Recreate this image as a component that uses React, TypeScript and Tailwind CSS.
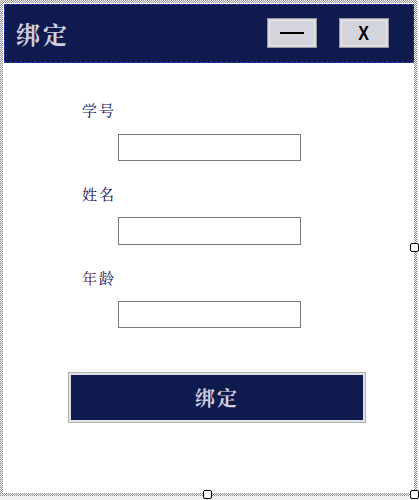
import React from "react";

const cjk = { fontFamily: '"Noto Serif CJK SC", "Noto Sans CJK SC", serif' };

function Handle({ className }: { className: string }) {
  return (
    <div
      className={`absolute w-[9px] h-[9px] bg-white border border-black rounded-[2px] ${className}`}
    />
  );
}

export default function App() {
  return (
    <div className="relative w-[419px] h-[500px] bg-[#f0f0f0] overflow-hidden">
      <div className="w-[417px] h-[496px] p-[3px] bg-[repeating-conic-gradient(#8a8a8a_0%_25%,#ffffff_0%_50%)] bg-[length:2px_2px]">
        <div className="w-full h-full bg-white pl-[1px] pt-[1px] flex flex-col">
          {/* header */}
          <div className="h-[59px] w-[410px] bg-[#0f1a4f] border border-dashed border-[#2a3cc8] flex items-center pl-[11px] pr-[24px]">
            <span
              className="text-[24px] leading-none font-bold text-[#cfd0e0] tracking-[3px]"
              style={cjk}
            >
              绑定
            </span>
            <div className="ml-auto flex gap-[22px] -mt-[2px]">
              <div className="w-[50px] h-[30px] bg-[#d4d4dc] border border-[#9a9a9a] p-[1px]">
                <div className="w-full h-full border border-[#e4e4ea] flex items-center justify-center">
                  <div className="w-[24px] h-[2px] bg-black" />
                </div>
              </div>
              <div className="w-[50px] h-[30px] bg-[#d4d4dc] border border-[#9a9a9a] p-[1px]">
                <div className="w-full h-full border border-[#e4e4ea] flex items-center justify-center">
                  <span
                    className="text-[20px] font-bold leading-none text-black scale-x-[0.8]"
                    style={{ fontFamily: '"Liberation Sans", Arial, sans-serif' }}
                  >
                    X
                  </span>
                </div>
              </div>
            </div>
          </div>

          {/* body */}
          <div className="flex flex-col pl-[78px]">
            <div
              className="mt-[37px] h-[20px] flex items-center text-[15px] text-[#14145a] tracking-[2px]"
              style={cjk}
            >
              学号
            </div>
            <div className="mt-[14px] ml-[36px] w-[183px] h-[27px] border border-[#7a7a7a] bg-white" />
            <div
              className="mt-[23px] h-[20px] flex items-center text-[15px] text-[#14145a] tracking-[2px]"
              style={cjk}
            >
              姓名
            </div>
            <div className="mt-[13px] ml-[36px] w-[183px] h-[28px] border border-[#7a7a7a] bg-white" />
            <div
              className="mt-[23px] h-[20px] flex items-center text-[15px] text-[#14145a] tracking-[2px]"
              style={cjk}
            >
              <span className="text-[#5a1c3c]">年</span>龄
            </div>
            <div className="mt-[13px] ml-[36px] w-[183px] h-[27px] border border-[#7a7a7a] bg-white" />
          </div>
          <div className="mt-[44px] ml-[64px] w-[298px] h-[51px] border border-[#b0b0b0] bg-[#e2e2e6] p-[2px]">
            <div className="w-full h-full bg-[#0f1a4f] flex items-center justify-center">
              <span
                className="text-[20px] leading-none font-bold text-[#cfd0e0] tracking-[2px]"
                style={cjk}
              >
                绑定
              </span>
            </div>
          </div>
        </div>
      </div>
      <Handle className="left-[410px] top-[243px]" />
      <Handle className="left-[203px] top-[490px]" />
      <Handle className="left-[410px] top-[490px]" />
    </div>
  );
}
